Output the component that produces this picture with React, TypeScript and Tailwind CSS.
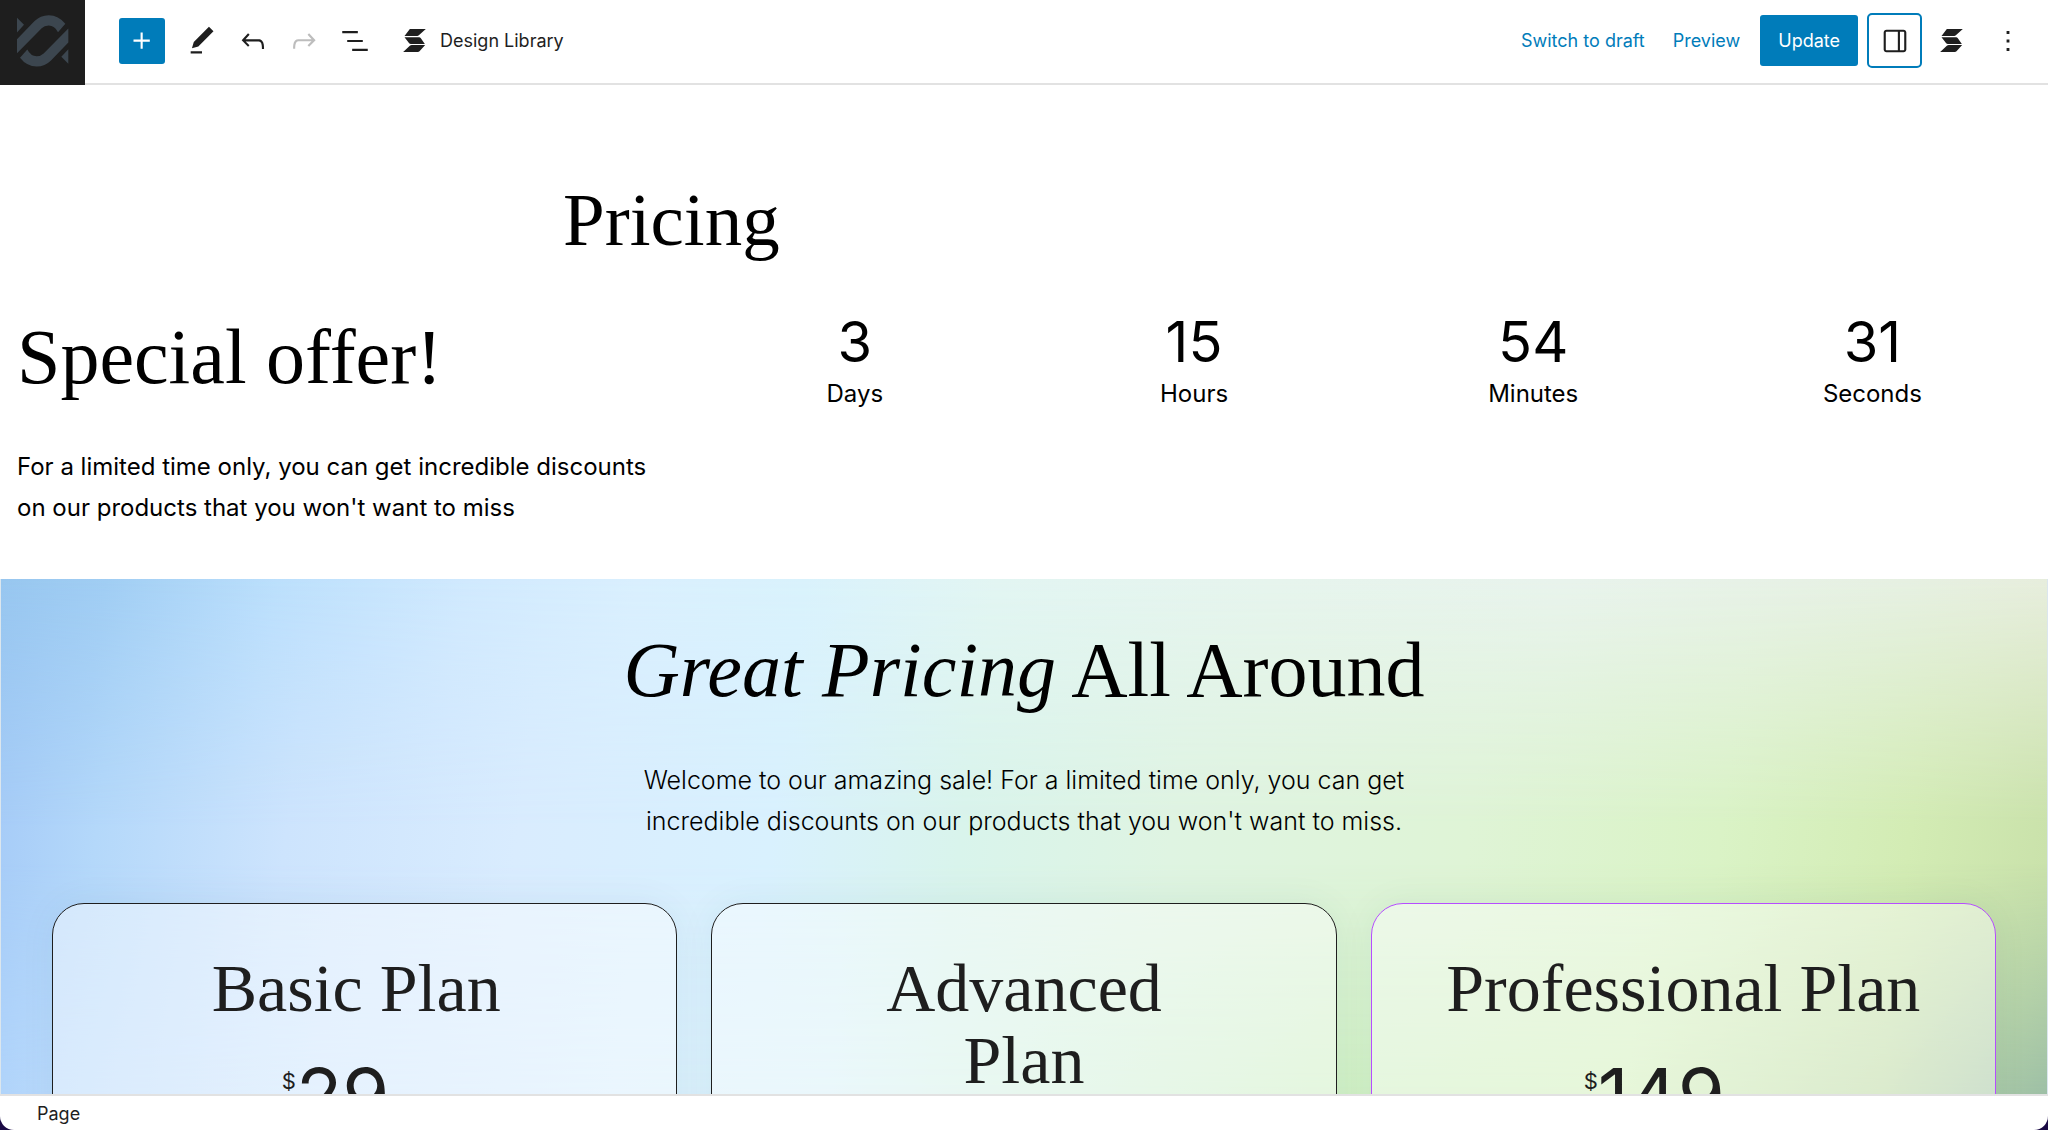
import type { ReactNode } from "react";

const paths = {
  plus: "M11 12.5V17.5H12.5V12.5H17.5V11H12.5V6H11V11H6V12.5H11Z",
  tool: "M20.1 5.1L16.9 2 6.2 12.7l-1.3 4.4 4.5-1.3L20.1 5.1zM4 20.8h8v-1.5H4v1.5z",
  undo: "M18.3 11.7c-.6-.6-1.4-.9-2.3-.9H6.7l2.9-3.3-1.1-1-4.5 5L8.5 16l1-1-2.7-2.7H16c.5 0 .9.2 1.3.5 1 1 1 3.4 1 4.5v.3h1.5v-.2c0-1.5 0-4.3-1.5-5.7z",
  redo: "M15.6 6.5l-1.1 1 2.9 3.3H8c-.9 0-1.7.3-2.3.9-1.4 1.5-1.4 4.2-1.4 5.6v.2h1.5v-.3c0-1.1 0-3.5 1-4.5.3-.3.7-.5 1.3-.5h9.2L14.5 15l1.1 1.1 4.6-4.6-4.6-5z",
  list: "M3 5h11v1.5H3V5Zm3.5 6.25h11v1.5h-11v-1.5ZM21 17.5H10V19h11v-1.5Z",
  sidebar:
    "M18 4H6c-1.1 0-2 .9-2 2v12c0 1.1.9 2 2 2h12c1.1 0 2-.9 2-2V6c0-1.1-.9-2-2-2zm-4 14.5H6c-.3 0-.5-.2-.5-.5V6c0-.3.2-.5.5-.5h8v13zm4.5-.5c0 .3-.2.5-.5.5h-2.5v-13H18c.3 0 .5.2.5.5v12z",
  more: "M13 19h-2v-2h2v2zm0-6h-2v-2h2v2zm0-6h-2V5h2v2z",
};

function Icon({ name }: { name: keyof typeof paths }) {
  return (
    <svg viewBox="0 0 24 24" className="size-[34px] fill-current" aria-hidden="true">
      <path d={paths[name]} />
    </svg>
  );
}

function StackableIcon() {
  return (
    <svg viewBox="0 0 68 69" className="size-[23px] shrink-0 fill-[#1e1e1e]" aria-hidden="true">
      <path d="M20 0H68L47 19Q45 21 42 21H4Z" />
      <path d="M4 25H48Q51 25 53 28L65 45H23Q20 45 18 43Z" />
      <path d="M26 48H66L49 67Q47 69 44 69H0L20 50Q22 48 26 48Z" />
    </svg>
  );
}

function SiteLogo() {
  return (
    <svg viewBox="0 0 255 252" className="h-full w-full fill-[#3c464f]" aria-hidden="true">
      <path d="M51 158V116L103 62Q121 44 146 44Q176 44 196 70L174 95Q164 75 146 75Q133 75 125 83Z" />
      <path d="M51 52L72 73L51 96Z" />
      <g transform="rotate(180 128 121)">
        <path d="M51 158V116L103 62Q121 44 146 44Q176 44 196 70L174 95Q164 75 146 75Q133 75 125 83Z" />
        <path d="M51 52L72 73L51 96Z" />
      </g>
    </svg>
  );
}

function ToolButton({ label, children, className = "" }: { label: string; children: ReactNode; className?: string }) {
  return (
    <button type="button" aria-label={label} className={`flex size-[46px] items-center justify-center rounded-[3px] ${className}`}>
      {children}
    </button>
  );
}

function Header() {
  return (
    <header className="flex h-[85px] shrink-0 items-center justify-between border-b-2 border-[#e2e2e2] bg-white pb-0.5 text-[18px] text-[#1e1e1e]">
      <div className="flex h-full items-center">
        <a href="#site" aria-label="View pages" className="-mb-1 block size-[85px] bg-[#1e1e1e]">
          <SiteLogo />
        </a>
        <ToolButton label="Add block" className="ml-[34px] bg-[#007cba] text-white">
          <Icon name="plus" />
        </ToolButton>
        <div className="ml-[14px] flex gap-[5px]">
          <ToolButton label="Tools"><Icon name="tool" /></ToolButton>
          <ToolButton label="Undo"><Icon name="undo" /></ToolButton>
          <ToolButton label="Redo" className="text-[#bdbdbd]"><Icon name="redo" /></ToolButton>
          <ToolButton label="List view"><Icon name="list" /></ToolButton>
        </div>
        <button type="button" className="ml-[25px] flex items-center gap-[14px]">
          <StackableIcon />
          Design Library
        </button>
      </div>
      <div className="flex items-center pr-[17px]">
        <button type="button" className="text-[#007cba]">Switch to draft</button>
        <a href="#preview" className="ml-7 text-[#007cba]">Preview</a>
        <button type="button" className="ml-5 h-[51px] rounded-[3px] bg-[#007cba] px-[18px] text-white">Update</button>
        <button
          type="button"
          aria-label="Settings"
          className="ml-[9px] flex size-[55px] items-center justify-center rounded-[5px] border-2 border-[#007cba]"
        >
          <Icon name="sidebar" />
        </button>
        <ToolButton label="Stackable settings" className="ml-[6px]"><StackableIcon /></ToolButton>
        <ToolButton label="Options" className="ml-[11px]"><Icon name="more" /></ToolButton>
      </div>
    </header>
  );
}

const countdown = [
  { value: "3", label: "Days" },
  { value: "15", label: "Hours" },
  { value: "54", label: "Minutes" },
  { value: "31", label: "Seconds" },
];

function Offer() {
  return (
    <section className="grid grid-cols-[33fr_67fr] pt-[50px] pr-1.5 pb-[51px] pl-[17px] text-black">
      <div>
        <h2 className="font-['Liberation_Serif',serif] text-[78px] leading-[94px] whitespace-nowrap">Special offer!</h2>
        <p className="mt-[42px] text-[24px] leading-[41px] whitespace-nowrap">
          For a limited time only, you can get incredible discounts
          <br />
          on our products that you won't want to miss
        </p>
      </div>
      <dl className="grid grid-cols-4 content-start pt-0.5 text-center">
        {countdown.map((c) => (
          <div key={c.label} className="flex flex-col-reverse gap-0.5">
            <dt className="text-[24px] leading-10">{c.label}</dt>
            <dd className="text-[56px] leading-[60px]">{c.value}</dd>
          </div>
        ))}
      </dl>
    </section>
  );
}

function Plan({ title, price, border, titleClass = "" }: { title: string; price?: string; border: string; titleClass?: string }) {
  return (
    <article className={`h-[640px] rounded-[32px] border bg-white/45 pt-12 text-center text-[#1e1e1e] shadow-[0_0_36px_rgba(30,90,110,0.06)] ${border}`}>
      <h3 className={`mx-auto font-['Liberation_Serif',serif] text-[68px] leading-[72px] ${titleClass}`}>{title}</h3>
      {price && (
        <p className="mt-[29px] flex items-start justify-center pr-[58px]">
          <span className="text-[22px] leading-[56px]">$</span>
          <span className="text-[76px] leading-[84px]">{price}</span>
        </p>
      )}
    </article>
  );
}

function Pricing() {
  return (
    <section className="relative isolate overflow-hidden border-x border-[#dbe6ee] pb-12">
      <div className="absolute inset-x-0 top-0 -z-10 h-[515px] bg-[linear-gradient(97deg,#a3c9f7_0%,#b4d8fa_6%,#cde4fd_15%,#d9ecfe_26%,#d9f1fe_38%,#d9f4ec_47%,#dff4e2_57%,#dff4d6_71%,#daf3c6_83%,#d3ecb4_92%,#c8e0a9_100%)]" />
      <div className="absolute inset-x-0 top-0 -z-10 h-[515px] bg-[linear-gradient(98deg,#97c6ef_0%,#a0cdf3_5%,#bbdffc_13%,#d0e9fe_22%,#d9effe_30%,#d9f2fc_38%,#e2f5f2_47%,#e6f4ed_60%,#e8f3ec_74%,#e6f0e2_90%,#e7ecda_100%)] [mask-image:linear-gradient(to_bottom,black,transparent_48%)]" />
      <div className="absolute inset-x-0 top-0 -z-10 h-[515px] bg-[linear-gradient(97deg,#a6cdf9_0%,#b7d8fb_5%,#cfe6fd_18%,#d9eefd_32%,#d9f1f8_42%,#d5f1e2_51%,#cfefc6_65%,#d2efbb_80%,#bedaa5_92%,#9dbfa6_100%)] [mask-image:linear-gradient(to_bottom,transparent_55%,black)]" />
      <div className="px-[51px] pt-11">
        <h2 className="text-center font-['Liberation_Serif',serif] text-[78px] leading-[94px] text-black">
          <em>Great Pricing</em> All Around
        </h2>
        <p className="mx-auto mt-[43px] max-w-[790px] text-center text-[25px] leading-[41px] font-light text-black">
          Welcome to our amazing sale! For a limited time only, you can get incredible discounts on our products that you
          won't want to miss.
        </p>
        <div className="mt-[61px] grid grid-cols-3 gap-[34px]">
          <Plan title={"Basic Plan\u00a0"} price="29" border="border-[#1e1e1e]" />
          <Plan title="Advanced Plan" border="border-[#1e1e1e]" titleClass="max-w-[340px]" />
          <Plan title="Professional Plan" price="149" border="border-[#b64dff]" />
        </div>
      </div>
    </section>
  );
}

export default function App() {
  return (
    <div className="flex h-screen flex-col bg-[#1b0a45] font-['Inter',sans-serif]">
      <Header />
      <main className="min-h-0 flex-1 overflow-hidden bg-white">
        <h1 className="mx-auto max-w-[922px] pt-[95px] font-['Liberation_Serif',serif] text-[75px] leading-[80px] text-black">
          Pricing
        </h1>
        <Offer />
        <Pricing />
      </main>
      <footer className="h-9 shrink-0 rounded-b-[14px] border-t-2 border-[#e2e2e2] bg-white pl-[37px] text-[18px] leading-[35px] text-[#1e1e1e]">
        Page
      </footer>
    </div>
  );
}
